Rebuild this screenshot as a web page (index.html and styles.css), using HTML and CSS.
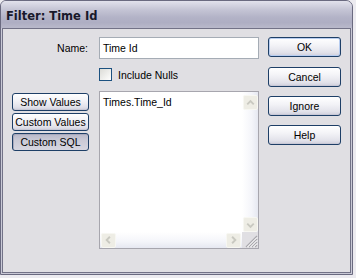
FILE: index.html
```html
<!DOCTYPE html>
<html>
<head>
<meta charset="utf-8">
<link rel="stylesheet" href="styles.css">
</head>
<body>
<div class="window">
  <div class="titlebar">Filter: Time Id</div>
  <div class="content">
    <div class="main">
      <div class="lbl">Name:</div>
      <div class="input">Time Id</div>
      <div class="spacer"></div>
      <div class="check-row"><span class="checkbox"></span><span class="check-text">Include Nulls</span></div>
      <div class="left-btns">
        <div class="btn small">Show Values</div>
        <div class="btn small">Custom Values</div>
        <div class="btn small pressed">Custom SQL</div>
      </div>
      <div class="editor">
        <div class="editor-text">Times.Time_Id</div>
        <div class="vscroll">
          <div class="sbtn"><svg width="14" height="14" viewBox="0 0 14 14"><polyline points="3.5,8.5 7,5 10.5,8.5" fill="none" stroke="#c9c9c1" stroke-width="2"/></svg></div>
          <div class="vtrack"></div>
          <div class="sbtn"><svg width="14" height="14" viewBox="0 0 14 14"><polyline points="3.5,5.5 7,9 10.5,5.5" fill="none" stroke="#c9c9c1" stroke-width="2"/></svg></div>
        </div>
        <div class="hscroll">
          <div class="sbtn"><svg width="14" height="14" viewBox="0 0 14 14"><polyline points="8.5,3.5 5,7 8.5,10.5" fill="none" stroke="#c9c9c1" stroke-width="2"/></svg></div>
          <div class="htrack"></div>
          <div class="sbtn"><svg width="14" height="14" viewBox="0 0 14 14"><polyline points="5.5,3.5 9,7 5.5,10.5" fill="none" stroke="#c9c9c1" stroke-width="2"/></svg></div>
        </div>
        <div class="grip"><svg width="16" height="16" viewBox="0 0 16 16">
          <g stroke="#a9a8ad" stroke-width="1.2">
            <line x1="15" y1="4" x2="4" y2="15"/>
            <line x1="15" y1="7" x2="7" y2="15"/>
            <line x1="15" y1="10" x2="10" y2="15"/>
            <line x1="15" y1="13" x2="13" y2="15"/>
          </g>
          <g stroke="#ffffff" stroke-width="1">
            <line x1="15" y1="5.5" x2="5.5" y2="15"/>
            <line x1="15" y1="8.5" x2="8.5" y2="15"/>
            <line x1="15" y1="11.5" x2="11.5" y2="15"/>
          </g>
        </svg></div>
      </div>
    </div>
    <div class="right-btns">
      <div class="btn big default">OK</div>
      <div class="btn big">Cancel</div>
      <div class="btn big">Ignore</div>
      <div class="btn big">Help</div>
    </div>
  </div>
</div>
</body>
</html>
```

FILE: styles.css
```css
html, body {
  margin: 0;
  padding: 0;
}
body {
  width: 356px;
  height: 278px;
  background: #ecebf0;
  font-family: "Liberation Sans", Arial, sans-serif;
  font-size: 10.5px;
  color: #000;
  overflow: hidden;
}
.window {
  width: 353px;
  height: 275px;
  box-sizing: border-box;
  border: 1px solid #6a6a80;
  border-radius: 6px 7px 0 0;
  background: #c9c9d6;
  display: flex;
  flex-direction: column;
  overflow: hidden;
}
.titlebar {
  height: 27px;
  box-sizing: border-box;
  padding: 4px 0 0 5px;
  line-height: 23px;
  font-family: "DejaVu Sans", Verdana, sans-serif;
  font-weight: bold;
  font-size: 11.5px;
  color: #18182a;
  background: linear-gradient(#e2e2ec 0%, #c6c6d6 30%, #b3b3c7 60%, #aeaec3 80%, #b9b9cb 100%);
  flex: none;
}
.content {
  flex: 1;
  margin: 0 1px 1px 1px;
  border: 1px solid #727287;
  background: #e0dfe3;
  display: flex;
  align-items: flex-start;
  padding: 8px 0 0 9px;
}
.main {
  display: grid;
  grid-template-columns: 77px 160px;
  grid-template-rows: 22px 32px 158px;
  column-gap: 10px;
}
.lbl {
  text-align: right;
  padding-right: 1px;
  line-height: 22px;
}
.input {
  border: 1px solid #a5acb5;
  background: #fff;
  padding-left: 3px;
  line-height: 20px;
}
.spacer { grid-column: 1; grid-row: 2; }
.check-row {
  grid-column: 2;
  grid-row: 2;
  margin-top: 9px;
  display: flex;
  align-items: center;
  height: 13px;
}
.checkbox {
  width: 11px;
  height: 11px;
  border: 1px solid #1c5180;
  background: linear-gradient(135deg, #dcdcd7 0%, #f4f4f2 70%, #ffffff 100%);
  flex: none;
}
.check-text {
  margin-left: 6px;
}
.left-btns {
  grid-column: 1;
  grid-row: 3;
  margin-top: 2px;
  display: flex;
  flex-direction: column;
  gap: 2px;
}
.btn {
  box-sizing: border-box;
  border: 1px solid #1e3f67;
  border-radius: 3px;
  background: linear-gradient(#ffffff 0%, #f3f3f7 40%, #e2e2ea 80%, #cfcfdc 100%);
  text-align: center;
  box-shadow: inset 0 -1px 0 #c8c8d6;
}
.small {
  width: 77px;
  height: 18px;
  line-height: 16px;
}
.pressed {
  background: linear-gradient(#b9b9c9 0%, #cacad6 40%, #d6d6e0 100%);
  box-shadow: inset 1px 1px 0 #a9a9bb;
}
.editor {
  grid-column: 2;
  grid-row: 3;
  border: 1px solid #a7a6ae;
  background: #fff;
  display: grid;
  grid-template-columns: 1fr 16px;
  grid-template-rows: 1fr 16px;
  height: 158px;
  box-sizing: border-box;
}
.editor-text {
  padding: 4px 0 0 3px;
  line-height: 13px;
}
.vscroll {
  display: flex;
  flex-direction: column;
  align-items: center;
  background: linear-gradient(90deg, #ffffff 0%, #f4f5fa 60%, #e6e8f1 100%);
  padding: 3px 0 0 0;
}
.vtrack { flex: 1; }
.hscroll {
  display: flex;
  align-items: center;
  background: linear-gradient(#ffffff 0%, #f4f5fa 60%, #e6e8f1 100%);
  padding: 0 1px 0 1px;
}
.htrack { flex: 1; }
.sbtn {
  width: 15px;
  height: 15px;
  box-sizing: border-box;
  border: 1px solid #f7f7f2;
  border-radius: 2px;
  background: #eeede5;
  display: flex;
  align-items: center;
  justify-content: center;
}
.sbtn svg { display: block; }
.grip {
  background: #e0dfe3;
}
.grip svg { display: block; }
.right-btns {
  margin-left: 9px;
  display: flex;
  flex-direction: column;
  width: 73px;
}
.big {
  width: 73px;
  height: 20px;
  line-height: 18px;
  margin-bottom: 9px;
}
.default {
  margin-bottom: 10px;
  box-shadow: inset 0 0 0 1px #b8cdf0, inset 0 -1px 0 #c8c8d6;
}
```
